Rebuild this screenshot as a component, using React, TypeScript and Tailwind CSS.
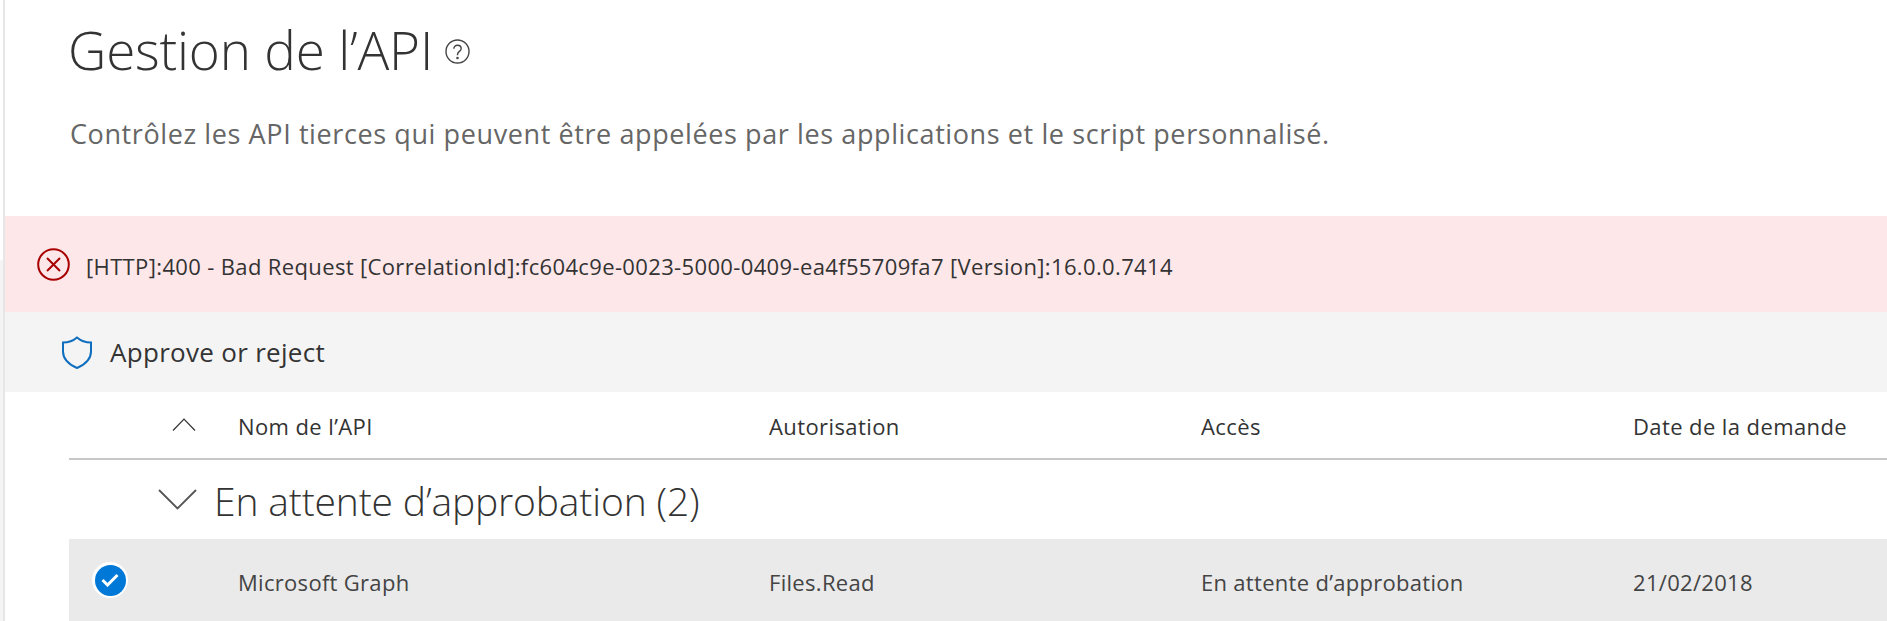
export default function App() {
  const cols = "grid grid-cols-[169px_531px_432px_432px_1fr] items-center";
  return (
    <div className="w-[1887px] h-[621px] overflow-hidden bg-white font-['Open_Sans',sans-serif] flex">
      <div className="w-[5px] shrink-0 flex flex-col">
        <div className="h-[260px] border-r-2 border-[#e6e6e6]" />
        <div className="flex-1 bg-[#f4f4f4] border-r-2 border-[#e6e6e6]" />
      </div>
      <div className="flex-1 min-w-0 flex flex-col">
        <div className="h-[216px] pl-[63px] flex flex-col">
          <div className="flex items-center pt-[15px] h-[84px]">
            <h1 className="text-[53px] leading-[68px] font-light text-[#333333] tracking-[-0.2px]">Gestion de l’API</h1>
            <svg className="ml-[12px] mt-[4px]" width="25" height="25" viewBox="0 0 25 25" fill="none" stroke="#444444" strokeWidth="1.4">
              <circle cx="12.5" cy="12.5" r="11.5" />
              <path d="M8.8 9.8c0-2.2 1.6-3.6 3.7-3.6s3.7 1.3 3.7 3.3c0 2.9-3.7 2.9-3.7 6v.8" />
              <circle cx="12.5" cy="19" r="0.6" fill="#444444" />
            </svg>
          </div>
          <p className="mt-[33px] pl-[2px] text-[27px] leading-[34px] tracking-[0.6px] text-[#666666]">Contrôlez les API tierces qui peuvent être appelées par les applications et le script personnalisé.</p>
        </div>
        <div className="h-[96px] bg-[#fde7e9] flex items-center pl-[32px]">
          <svg width="33" height="33" viewBox="0 0 33 33" fill="none" stroke="#a80000" strokeWidth="2">
            <circle cx="16.5" cy="16.5" r="15.300" />
            <path d="M10 10l13 13M23 10l-13 13" />
          </svg>
          <span className="ml-[16px] mt-[4px] text-[22px] tracking-[0.36px] text-[#333333]">[HTTP]:400 - Bad Request [CorrelationId]:fc604c9e-0023-5000-0409-ea4f55709fa7 [Version]:16.0.0.7414</span>
        </div>
        <div className="h-[80px] bg-[#f4f4f4] flex items-center pl-[56px]">
          <svg width="32" height="33" viewBox="0 0 32 33" fill="none" stroke="#106ebe" strokeWidth="2">
            <path d="M2 6.5c5 0 10-1.5 14-5 4 3.500 9 5 14 5v9c0 7.500-6 13-14 16.500C8 28.500 2 23 2 15.500z" />
          </svg>
          <span className="ml-[17px] mt-[1px] text-[26px] tracking-[0.3px] text-[#333333]">Approve or reject</span>
        </div>
        <div className="pl-[64px] flex-1 flex flex-col">
          <div className={`${cols} h-[68px] pt-[3px] border-b-2 border-[#c8c8c8] text-[22px] tracking-[0.4px] text-[#333333]`}>
            <div className="flex justify-end pr-[42px] -mt-[4px]">
              <svg width="24" height="13" viewBox="0 0 24 13" fill="none" stroke="#333333" strokeWidth="1.2">
                <path d="M1 12.5L12 1l11 11.500" />
              </svg>
            </div>
            <div>Nom de l’API</div>
            <div>Autorisation</div>
            <div>Accès</div>
            <div>Date de la demande</div>
          </div>
          <div className="h-[79px] flex items-center pl-[89px]">
            <svg width="39" height="21" viewBox="0 0 39 21" fill="none" stroke="#555555" strokeWidth="1.8">
              <path d="M1 1l18.500 18.500L38 1" />
            </svg>
            <span className="ml-[17px] mt-[4px] text-[39px] tracking-[-0.15px] font-light text-[#333333]">En attente d’approbation (2)</span>
          </div>
          <div className={`${cols} flex-1 bg-[#eaeaea] text-[22px] tracking-[0.3px] text-[#444444]`}>
            <div className="pl-[23px]">
              <div className="w-[36px] h-[36px] rounded-full bg-white flex items-center justify-center">
                <div className="w-[31px] h-[31px] rounded-full bg-[#0078d7] flex items-center justify-center">
                  <svg width="18" height="14" viewBox="0 0 18 14" fill="none" stroke="#ffffff" strokeWidth="3">
                    <path d="M1.5 7l5 5 10-10" />
                  </svg>
                </div>
              </div>
            </div>
            <div className="pt-[5px]">Microsoft Graph</div>
            <div className="pt-[5px]">Files.Read</div>
            <div className="pt-[5px]">En attente d’approbation</div>
            <div className="pt-[5px]">21/02/2018</div>
          </div>
        </div>
      </div>
    </div>
  );
}
